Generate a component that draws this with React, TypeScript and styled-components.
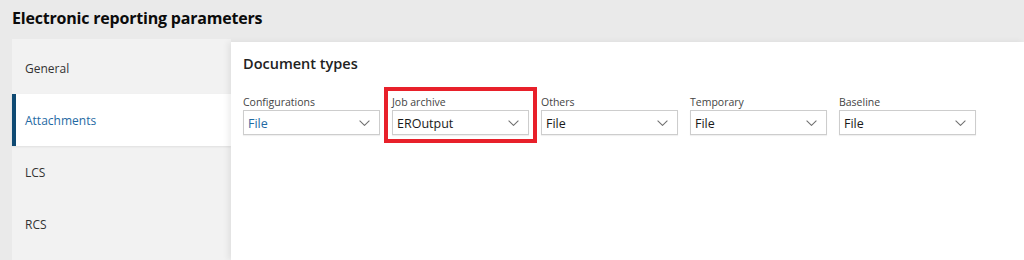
import React from "react";
import styled, { createGlobalStyle, css } from "styled-components";

const GlobalStyle = createGlobalStyle`
  html, body { margin: 0; padding: 0; background: #eaeaea; }
  body { font-family: "Segoe UI", "Open Sans", "Noto Sans", sans-serif; color: #212121; }
`;

const Page = styled.div`
  width: 1024px;
  height: 260px;
  overflow: hidden;
  display: flex;
  flex-direction: column;
  background: #eaeaea;
`;

const Header = styled.header`
  height: 39px;
  box-sizing: border-box;
  padding: 7px 12px 0;
`;

const Title = styled.h1`
  margin: 0;
  font-size: 16px;
  line-height: 22px;
  font-weight: 700;
  color: #0b0b0b;
  letter-spacing: -0.2px;
`;

const Body = styled.div`
  flex: 1;
  display: flex;
  padding-left: 12px;
`;

const Nav = styled.nav`
  width: 219px;
  flex: none;
  background: #f2f2f2;
  padding-top: 3px;
`;

const NavItem = styled.div<{ $active?: boolean }>`
  height: 52px;
  display: flex;
  align-items: center;
  box-sizing: border-box;
  padding-left: 13px;
  font-size: 12px;
  color: #333;
  ${(p) =>
    p.$active &&
    css`
      background: #fff;
      border-left: 4px solid #0f4a73;
      padding-left: 9px;
      color: #1f6aa3;
      box-shadow: 0 1px 2px rgba(0, 0, 0, 0.08);
    `}
`;

const Main = styled.main`
  flex: 1;
  margin-top: 3px;
  background: #fff;
  box-shadow: -3px 0 6px rgba(0, 0, 0, 0.07);
  padding: 12px 12px 0;
`;

const SectionTitle = styled.h2`
  margin: 0 0 21px;
  font-size: 14.5px;
  line-height: 20px;
  font-weight: 600;
  color: #222;
`;

const FieldsRow = styled.div`
  display: flex;
  gap: 12px;
`;

const Field = styled.div<{ $highlight?: boolean }>`
  width: 137px;
  display: flex;
  flex-direction: column;
  ${(p) =>
    p.$highlight &&
    css`
      outline: 4px solid #e8202a;
      outline-offset: 4px;
    `}
`;

const Label = styled.label`
  font-size: 10.5px;
  line-height: 14px;
  color: #444;
  margin-bottom: 1px;
`;

const Select = styled.div<{ $link?: boolean }>`
  height: 25px;
  box-sizing: border-box;
  border: 1px solid #cdcdcd;
  box-shadow: 0 1px 1px rgba(0, 0, 0, 0.06);
  display: flex;
  align-items: center;
  justify-content: space-between;
  padding: 1px 9px 0 4px;
  font-size: 12.5px;
  color: ${(p) => (p.$link ? "#1f6aa3" : "#1a1a1a")};
`;

const Chevron = () => (
  <svg width="11" height="6" viewBox="0 0 11 6" fill="none">
    <path d="M0.6 0.6 L5.5 5.4 L10.4 0.6" stroke="#707070" strokeWidth="1.05" />
  </svg>
);

const fields = [
  { label: "Configurations", value: "File", link: true },
  { label: "Job archive", value: "EROutput", highlight: true },
  { label: "Others", value: "File" },
  { label: "Temporary", value: "File" },
  { label: "Baseline", value: "File" },
];

const navItems = ["General", "Attachments", "LCS", "RCS"];

export default function App() {
  return (
    <Page>
      <GlobalStyle />
      <Header>
        <Title>Electronic reporting parameters</Title>
      </Header>
      <Body>
        <Nav>
          {navItems.map((n) => (
            <NavItem key={n} $active={n === "Attachments"}>
              {n}
            </NavItem>
          ))}
        </Nav>
        <Main>
          <SectionTitle>Document types</SectionTitle>
          <FieldsRow>
            {fields.map((f) => (
              <Field key={f.label} $highlight={f.highlight}>
                <Label>{f.label}</Label>
                <Select $link={f.link}>
                  <span>{f.value}</span>
                  <Chevron />
                </Select>
              </Field>
            ))}
          </FieldsRow>
        </Main>
      </Body>
    </Page>
  );
}
